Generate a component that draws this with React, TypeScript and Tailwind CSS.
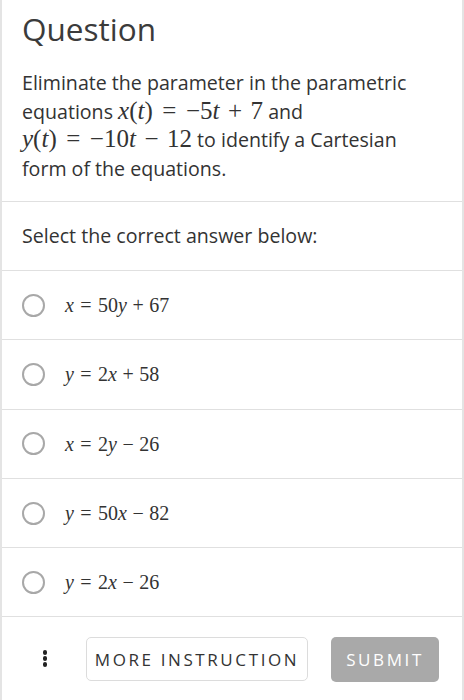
import React from "react";

const serif = "font-['Liberation_Serif','Times_New_Roman',serif]";

function V({ children }: { children: React.ReactNode }) {
  return <span className="italic">{children}</span>;
}

function Rel({ children }: { children: React.ReactNode }) {
  return <span className="mx-[0.38em]">{children}</span>;
}

function Bin({ children }: { children: React.ReactNode }) {
  return <span className="mx-[0.34em]">{children}</span>;
}

function ORel({ children }: { children: React.ReactNode }) {
  return <span className="mx-[0.32em]">{children}</span>;
}

function OBin({ children }: { children: React.ReactNode }) {
  return <span className="mx-[0.28em]">{children}</span>;
}

const options: React.ReactNode[] = [
  <>
    <V>x</V>
    <ORel>=</ORel>50<V>y</V>
    <OBin>+</OBin>67
  </>,
  <>
    <V>y</V>
    <ORel>=</ORel>2<V>x</V>
    <OBin>+</OBin>58
  </>,
  <>
    <V>x</V>
    <ORel>=</ORel>2<V>y</V>
    <OBin>−</OBin>26
  </>,
  <>
    <V>y</V>
    <ORel>=</ORel>50<V>x</V>
    <OBin>−</OBin>82
  </>,
  <>
    <V>y</V>
    <ORel>=</ORel>2<V>x</V>
    <OBin>−</OBin>26
  </>,
];

export default function App() {
  return (
    <div className="w-[464px] h-[700px] bg-white border-x-2 border-[#e4e4e4] font-['Open_Sans',sans-serif] text-[#333] overflow-hidden flex flex-col">
      <div className="pl-[20px] pr-[12px] pb-[18px] border-b border-[#e0e0e0]">
        <h1 className="pt-[10px] text-[31.5px] leading-[38px] font-normal text-[#3b3b3b]">
          Question
        </h1>
        <p className="mt-[21px] text-[19.6px] leading-[28.5px] text-[#333]">
          Eliminate the parameter in the parametric
          <br />
          equations{" "}
          <span className={`${serif} text-[25px] leading-none whitespace-nowrap`}>
            <V>x</V>(<V>t</V>)<Rel>=</Rel>−5<V>t</V>
            <Bin>+</Bin>7
          </span>{" "}
          and
          <br />
          <span className={`${serif} text-[25px] leading-none whitespace-nowrap`}>
            <V>y</V>(<V>t</V>)<Rel>=</Rel>−10<V>t</V>
            <Bin>−</Bin>12
          </span>{" "}
          to identify a Cartesian
          <br />
          form of the equations.
        </p>
      </div>
      <div className="h-[69px] shrink-0 pl-[20px] flex items-center border-b border-[#e0e0e0] text-[19.6px]">
        Select the correct answer below:
      </div>
      {options.map((o, i) => (
        <div
          key={i}
          className="h-[69.3px] shrink-0 flex items-center border-b border-[#e0e0e0] pl-[20px]"
        >
          <span className="w-[23px] h-[23px] rounded-full border-[2.5px] border-[#a8a8a8] shrink-0" />
          <span className={`ml-[20px] ${serif} text-[20px] text-[#333]`}>{o}</span>
        </div>
      ))}
      <div className="flex-1 flex items-start pt-[20px]">
        <div className="w-[84px] flex justify-center pt-[13px] pl-[2px]">
          <div className="flex flex-col gap-[1.5px]">
            <span className="w-[4.5px] h-[4.5px] rounded-full bg-[#222]" />
            <span className="w-[4.5px] h-[4.5px] rounded-full bg-[#222]" />
            <span className="w-[4.5px] h-[4.5px] rounded-full bg-[#222]" />
          </div>
        </div>
        <button className="w-[222px] h-[44px] border border-[#dcdcdc] rounded-[5px] bg-white text-[17px] tracking-[2.6px] text-[#333] flex items-center justify-center">
          MORE INSTRUCTION
        </button>
        <button className="ml-[23px] w-[108px] h-[45px] rounded-[5px] bg-[#a9a9a9] text-white text-[17px] tracking-[2.6px] flex items-center justify-center">
          SUBMIT
        </button>
      </div>
    </div>
  );
}
